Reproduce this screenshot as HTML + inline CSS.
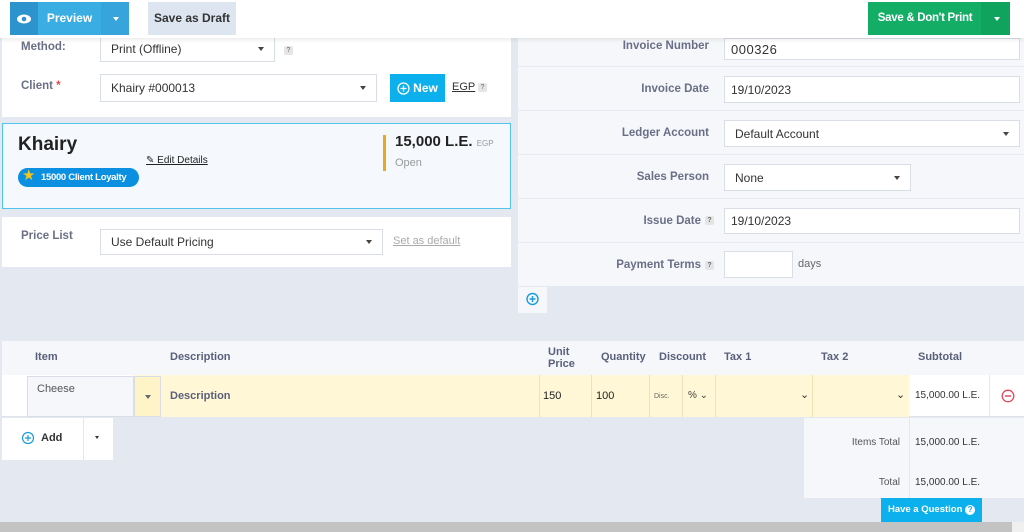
<!DOCTYPE html>
<html><head><style>
*{box-sizing:border-box;margin:0;padding:0}
body{width:1024px;height:532px;overflow:hidden;background:#e4e9f1;font-family:"Liberation Sans",sans-serif;position:relative;font-size:12px;color:#333}
.a{position:absolute}
.lbl{color:#6a6f86;font-weight:bold;font-size:11.5px}
.inp{position:absolute;background:#fff;border:1px solid #d8dde6;font-size:12px;color:#333;padding-left:10px;display:flex;align-items:center}
.car{position:absolute;right:10px;top:50%;margin-top:-2px;border:3px solid transparent;border-top:4px solid #444}
.q{display:inline-block;width:9px;height:9px;background:#e5e5e5;border-radius:2px;font-size:7px;color:#666;text-align:center;line-height:9px;vertical-align:middle;margin-left:4px}
.th{position:absolute;color:#5a607a;font-weight:bold;font-size:11px}
.rrow{position:absolute;left:518px;width:506px;height:44px;border-bottom:1px solid #e6ebf2}
.rl{position:absolute;right:315px;top:0;height:100%;display:flex;align-items:center}
</style></head><body>
<div class="a" style="left:0;top:0;width:1024px;height:38px;background:#fff;box-shadow:0 2px 4px rgba(0,0,0,.08);z-index:5">
 <div class="a" style="left:10px;top:2px;width:28px;height:33px;background:#2c93cc"><svg width="28" height="33"><ellipse cx="14" cy="17" rx="7" ry="4.5" fill="#fff"/><circle cx="14" cy="17" r="2.3" fill="#2c93cc"/></svg></div>
 <div class="a" style="left:38px;top:2px;width:63px;height:33px;background:#3aaee2;color:#fff;font-weight:bold;font-size:12px;line-height:33px;text-align:center">Preview</div>
 <div class="a" style="left:101px;top:2px;width:28px;height:33px;background:#38a4dc"><div class="car" style="right:10px;border-top-color:#fff"></div></div>
 <div class="a" style="left:148px;top:2px;width:88px;height:33px;background:#dde6f0;color:#333;font-weight:bold;font-size:12px;line-height:33px;text-align:center">Save as Draft</div>
 <div class="a" style="left:868px;top:2px;width:114px;height:33px;background:#14ad66;color:#fff;font-weight:bold;font-size:11.5px;letter-spacing:-.3px;line-height:33px;text-align:center">Save &amp; Don't Print</div>
 <div class="a" style="left:981px;top:2px;width:29px;height:33px;background:#0fa35e"><div class="car" style="right:10px;border-top-color:#fff"></div></div>
</div>
<div class="a" style="left:2px;top:38px;width:509px;height:79px;background:#fff"></div>
<div class="a lbl" style="left:21px;top:41px">Method:</div>
<div class="inp" style="left:100px;top:36px;width:175px;height:26px">Print (Offline)<div class="car"></div></div>
<div class="a" style="left:280px;top:43px"><span class="q">?</span></div>
<div class="a lbl" style="left:21px;top:80px">Client <span style="color:#e44">*</span></div>
<div class="inp" style="left:100px;top:74px;width:277px;height:28px">Khairy #000013<div class="car"></div></div>
<div class="a" style="left:390px;top:74px;width:55px;height:28px;background:#0bb0ec;color:#fff;font-weight:bold;font-size:12px;display:flex;align-items:center;justify-content:center;gap:3px"><svg width="13" height="13"><circle cx="6.5" cy="6.5" r="5.5" fill="none" stroke="#fff" stroke-width="1.3"/><path d="M6.5 3.5v6M3.5 6.5h6" stroke="#fff" stroke-width="1.3"/></svg>New</div>
<div class="a" style="left:452px;top:81px;font-size:11px;text-decoration:underline;color:#333">EGP</div>
<div class="a" style="left:474px;top:80px"><span class="q">?</span></div>
<div class="a" style="left:2px;top:123px;width:509px;height:86px;background:#f5f8fc;border:1px solid #52c3ea"></div>
<div class="a" style="left:18px;top:134px;font-size:19px;font-weight:bold;color:#222">Khairy</div>
<div class="a" style="left:146px;top:155px;font-size:10px;text-decoration:underline;color:#222">✎ Edit Details</div>
<div class="a" style="left:18px;top:168px;width:121px;height:19px;background:#0b8fe0;border-radius:10px;color:#fff;font-weight:bold;font-size:9.5px;letter-spacing:-.3px;line-height:19px;padding-left:23px">15000 Client Loyalty</div>
<div class="a" style="left:22px;top:166px;color:#f5c518;font-size:15px">★</div>
<div class="a" style="left:383px;top:135px;width:3px;height:36px;background:#e9a91f"></div>
<div class="a" style="left:395px;top:133px;font-size:15px;font-weight:bold;color:#222">15,000 L.E. <span style="font-size:8px;color:#999;font-weight:normal">EGP</span></div>
<div class="a" style="left:395px;top:157px;color:#999;font-size:11px">Open</div>
<div class="a" style="left:2px;top:217px;width:509px;height:50px;background:#fff"></div>
<div class="a lbl" style="left:21px;top:230px">Price List</div>
<div class="inp" style="left:100px;top:229px;width:283px;height:26px">Use Default Pricing<div class="car"></div></div>
<div class="a" style="left:393px;top:235px;font-size:11px;color:#aaa;text-decoration:underline">Set as default</div>
<div class="a" style="left:518px;top:38px;width:506px;height:248px;background:#f5f7fa"></div>
<div class="rrow" style="top:23px"><div class="rl lbl" style="top:15px;height:16px">Invoice Number</div><div class="inp" style="left:206px;top:15px;width:296px;height:22px;padding-left:6px;font-size:13px;letter-spacing:.5px">000326</div></div>
<div class="rrow" style="top:67px"><div class="rl lbl">Invoice Date</div><div class="inp" style="left:206px;top:9px;width:296px;height:27px;padding-left:6px">19/10/2023</div></div>
<div class="rrow" style="top:111px"><div class="rl lbl">Ledger Account</div><div class="inp" style="left:206px;top:9px;width:296px;height:27px">Default Account<div class="car"></div></div></div>
<div class="rrow" style="top:155px"><div class="rl lbl">Sales Person</div><div class="inp" style="left:206px;top:9px;width:187px;height:27px">None<div class="car"></div></div></div>
<div class="rrow" style="top:199px"><div class="rl lbl" style="right:310px">Issue Date <span class="q">?</span></div><div class="inp" style="left:206px;top:9px;width:296px;height:26px;padding-left:6px">19/10/2023</div></div>
<div class="rrow" style="top:243px;border:none"><div class="rl lbl" style="right:310px">Payment Terms <span class="q">?</span></div><div class="inp" style="left:206px;top:8px;width:69px;height:27px"></div><div class="a" style="left:280px;top:15px;color:#666;font-size:11px">days</div></div>
<div class="a" style="left:518px;top:287px;width:29px;height:26px;background:#f5f7fa"><svg width="29" height="26"><circle cx="14.5" cy="12" r="5.5" fill="none" stroke="#1a9be0" stroke-width="1.4"/><path d="M14.5 9v6M11.5 12h6" stroke="#1a9be0" stroke-width="1.4"/></svg></div>
<div class="a" style="left:2px;top:341px;width:1022px;height:34px;background:#f5f7fb"></div>
<div class="th" style="left:35px;top:351px">Item</div>
<div class="th" style="left:170px;top:351px">Description</div>
<div class="th" style="left:548px;top:346px;line-height:12px">Unit<br>Price</div>
<div class="th" style="left:601px;top:351px">Quantity</div>
<div class="th" style="left:659px;top:351px">Discount</div>
<div class="th" style="left:724px;top:351px">Tax 1</div>
<div class="th" style="left:821px;top:351px">Tax 2</div>
<div class="th" style="left:918px;top:351px">Subtotal</div>
<div class="a" style="left:2px;top:375px;width:1022px;height:42px;background:#fff;border-bottom:1px solid #e0e4ea"></div>
<div class="a" style="left:134px;top:375px;width:775px;height:42px;background:#fff7d6"></div>
<div class="a" style="left:27px;top:376px;width:107px;height:41px;background:#f5f7fb;border:1px solid #d8dde6;font-size:11px;color:#555;padding:6px 9px">Cheese</div>
<div class="a" style="left:134px;top:376px;width:27px;height:41px;border:1px solid #d8dde6;background:#fff3c8"><div class="car" style="right:9px;border-top-color:#667"></div></div>
<div class="a" style="left:170px;top:390px;color:#5a607a;font-size:11px;font-weight:bold">Description</div>
<div class="a" style="left:539px;top:375px;width:1px;height:42px;background:#eee2b8"></div>
<div class="a" style="left:591px;top:375px;width:1px;height:42px;background:#eee2b8"></div>
<div class="a" style="left:649px;top:375px;width:1px;height:42px;background:#eee2b8"></div>
<div class="a" style="left:682px;top:375px;width:1px;height:42px;background:#eee2b8"></div>
<div class="a" style="left:715px;top:375px;width:1px;height:42px;background:#eee2b8"></div>
<div class="a" style="left:812px;top:375px;width:1px;height:42px;background:#eee2b8"></div>
<div class="a" style="left:543px;top:390px;font-size:11px;color:#222">150</div>
<div class="a" style="left:596px;top:390px;font-size:11px;color:#222">100</div>
<div class="a" style="left:654px;top:393px;font-size:7px;color:#666">Disc.</div>
<div class="a" style="left:688px;top:390px;font-size:10px;color:#444">% ⌄</div>
<div class="a" style="left:800px;top:388px;font-size:11px;color:#333">⌄</div>
<div class="a" style="left:896px;top:388px;font-size:11px;color:#333">⌄</div>
<div class="a" style="left:915px;top:390px;font-size:10px;color:#333">15,000.00 L.E.</div>
<div class="a" style="left:989px;top:375px;width:1px;height:42px;background:#e6e6e6"></div>
<svg class="a" style="left:1001px;top:389px" width="14" height="14"><circle cx="7" cy="7" r="5.8" fill="none" stroke="#e8475a" stroke-width="1.3"/><path d="M4 7h6" stroke="#e8475a" stroke-width="1.5"/></svg>
<div class="a" style="left:2px;top:418px;width:111px;height:42px;background:#fff"></div>
<div class="a" style="left:83px;top:418px;width:1px;height:42px;background:#e6e6e6"></div>
<svg class="a" style="left:21px;top:431px" width="14" height="14"><circle cx="7" cy="7" r="5.5" fill="none" stroke="#1a9be0" stroke-width="1.2"/><path d="M7 4v6M4 7h6" stroke="#1a9be0" stroke-width="1.2"/></svg>
<div class="a" style="left:41px;top:432px;font-weight:bold;font-size:11px;color:#333">Add</div>
<div class="a" style="left:95px;top:436px;border:2.5px solid transparent;border-top:3px solid #333"></div>
<div class="a" style="left:804px;top:418px;width:220px;height:80px;background:#f5f7fa"></div>
<div class="a" style="left:909px;top:418px;width:1px;height:80px;background:#e3e7ee"></div>
<div class="a" style="left:820px;top:437px;width:80px;text-align:right;font-size:10px;color:#555">Items Total</div>
<div class="a" style="left:915px;top:437px;font-size:10px;color:#333">15,000.00 L.E.</div>
<div class="a" style="left:820px;top:477px;width:80px;text-align:right;font-size:10px;color:#555">Total</div>
<div class="a" style="left:915px;top:477px;font-size:10px;color:#333">15,000.00 L.E.</div>
<div class="a" style="left:881px;top:498px;width:101px;height:24px;background:#0bb0ec;color:#fff;font-size:9.5px;font-weight:bold;line-height:24px;text-align:center">Have a Question <span style="display:inline-block;width:10px;height:10px;border-radius:50%;background:#fff;color:#0bb0ec;font-size:8px;line-height:10px">?</span></div>
<div class="a" style="left:0;top:522px;width:1024px;height:10px;background:#c3c3c3"></div>
<div class="a" style="left:1012px;top:522px;width:12px;height:10px;background:#f0f0f0"></div>
</body></html>
